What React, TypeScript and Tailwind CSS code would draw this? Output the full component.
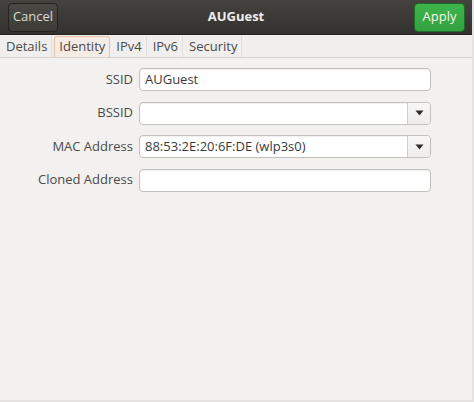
import React from "react";

function Caret() {
  return (
    <svg width="9" height="6" viewBox="0 0 9 6">
      <path d="M0.5 0.5 H8.5 L4.5 5.5 Z" fill="#2e2e2e" />
    </svg>
  );
}

function Row({ label, value, dropdown }: { label: string; value?: string; dropdown?: boolean }) {
  return (
    <div className="flex items-center h-[23px]">
      <div className="w-[133px] text-right pr-0 text-[13px] text-[#4a4a4a]">{label}</div>
      <div className="ml-[6px] w-[292px] h-[23px] flex rounded-[4px] border border-[#c3c0bb] bg-white overflow-hidden shadow-[inset_0_1px_1px_rgba(0,0,0,0.06)]">
        <div className="flex-1 flex items-center px-[5px] text-[13px] text-[#3a3a3a]">{value}</div>
        {dropdown && (
          <div className="w-[23px] flex items-center justify-center border-l border-[#d2cfca] bg-gradient-to-b from-[#f8f7f6] to-[#eeedeb]">
            <Caret />
          </div>
        )}
      </div>
    </div>
  );
}

export default function App() {
  const tabs = ["Details", "Identity", "IPv4", "IPv6", "Security"];
  return (
    <div
      className="w-[474px] h-[402px] bg-[#f2f1ef] flex flex-col border-r-[2px] border-b-[2px] border-[#e4e3e1]"
      style={{ fontFamily: '"Open Sans", "Noto Sans", sans-serif' }}
    >
      <div className="h-[35px] flex items-center justify-between pl-[8px] pr-[7px] bg-gradient-to-b from-[#45433e] to-[#33322e] border-b border-[#24231f]">
        <div className="w-[50px] h-[29px] flex items-center justify-center rounded-[4px] border border-[#24231f] bg-gradient-to-b from-[#4a4843] to-[#3d3c37] text-[13px] text-[#dcdad5]">
          Cancel
        </div>
        <div className="text-[13px] font-bold text-[#eeeeec]">AUGuest</div>
        <div className="w-[51px] h-[29px] flex items-center justify-center rounded-[4px] border border-[#1f6b27] bg-gradient-to-b from-[#3fb44b] to-[#32a23f] text-[13px] text-[#f0f7ef]">
          Apply
        </div>
      </div>
      <div className="h-[23px] flex items-stretch gap-[2px] px-[2px] pt-[1px] bg-[#f0efed] border-b border-[#d4d2ce]">
        {tabs.map((t) => (
          <div
            key={t}
            className={
              t === "Identity"
                ? "px-[4px] flex items-center text-[13px] text-[#4a4a4a] rounded-t-[3px] border border-b-0 border-[#ecc0a8] bg-[#f6ece6]"
                : "px-[4px] flex items-center text-[13px] text-[#4a4a4a] border-r border-[#e2e0dc]"
            }
          >
            {t}
          </div>
        ))}
      </div>
      <div className="flex flex-col gap-[10.5px] pt-[10px]">
        <Row label="SSID" value="AUGuest" />
        <Row label="BSSID" dropdown />
        <Row label="MAC Address" value="88:53:2E:20:6F:DE (wlp3s0)" dropdown />
        <Row label="Cloned Address" />
      </div>
    </div>
  );
}
